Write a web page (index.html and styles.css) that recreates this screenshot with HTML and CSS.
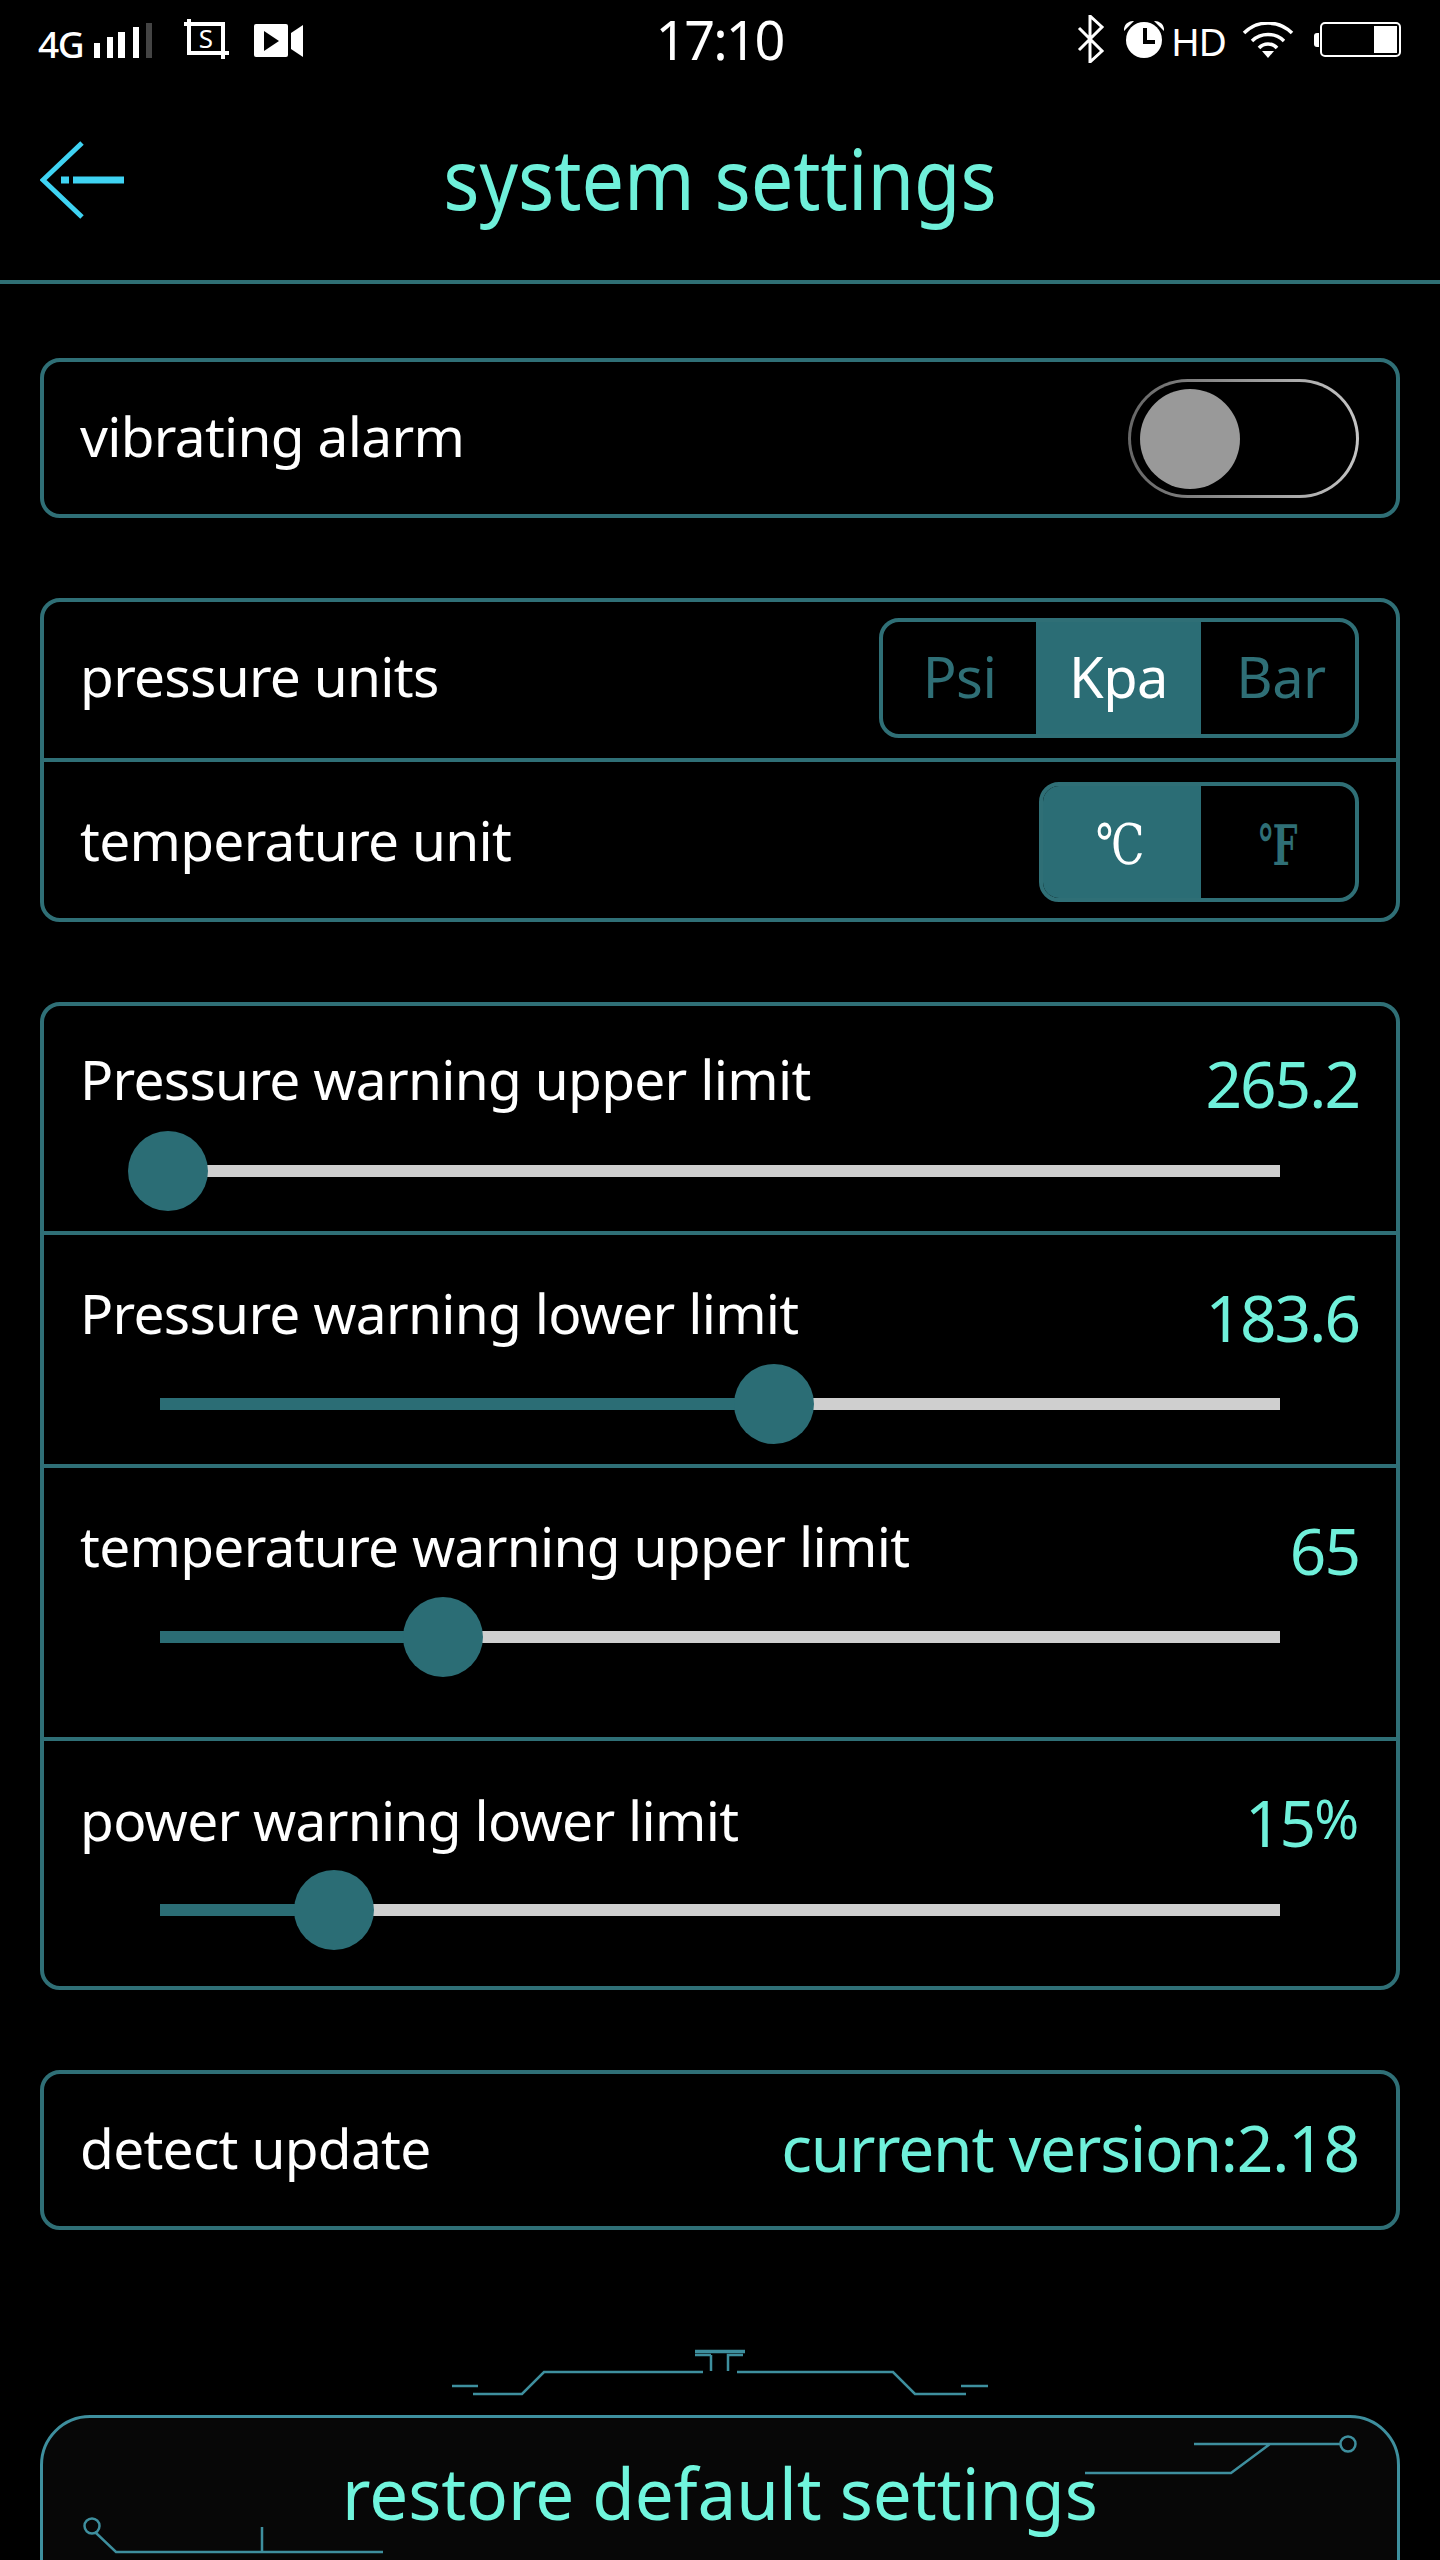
FILE: index.html
```html
<!DOCTYPE html>
<html lang="en">
<head>
<meta charset="utf-8">
<title>system settings</title>
<link rel="stylesheet" href="styles.css">
</head>
<body>
<div class="phone">
  <div class="status">
    <div class="status-left">
      <span class="net">4G</span>
      <svg class="i-signal" width="58" height="36" viewBox="0 0 58 36"><rect x="0" y="20" width="6" height="15" fill="#fff"/><rect x="13" y="14" width="6" height="21" fill="#fff"/><rect x="24" y="9" width="7" height="26" fill="#fff"/><rect x="39" y="4" width="6" height="31" fill="#fff"/><rect x="52" y="0" width="6" height="35" fill="#444"/></svg>
      <svg class="i-shot" width="46" height="40" viewBox="0 0 46 40"><path d="M5 0v34h40M0 5h39v35" fill="none" stroke="#fff" stroke-width="4"/><text x="22" y="29" class="shot-s">S</text></svg>
      <svg class="i-video" width="50" height="34" viewBox="0 0 50 34"><rect width="34" height="33" rx="2" fill="#fff"/><path d="M10 7l15 10-15 10z" fill="#000"/><path d="M37 9l12-8v32l-12-8z" fill="#fff"/></svg>
    </div>
    <div class="time">17:10</div>
    <div class="status-right">
      <svg class="i-bt" width="28" height="48" viewBox="0 0 28 48"><path d="M2 13l23 23-12 11V1l12 11L2 35" fill="none" stroke="#fff" stroke-width="3"/></svg>
      <svg class="i-alarm" width="40" height="38" viewBox="0 0 40 38"><circle cx="20" cy="20" r="18" fill="#fff"/><path d="M21 8v14h10" fill="none" stroke="#000" stroke-width="4"/><path d="M0 11a9 9 0 0 1 10-10zM40 11a9 9 0 0 0-10-10z" fill="#fff"/></svg>
      <span class="hd">HD</span>
      <svg class="i-wifi" width="52" height="36" viewBox="0 0 52 36"><path d="M2 11a34 34 0 0 1 48 0M10 19a23 23 0 0 1 32 0M17 26a12 12 0 0 1 18 0" fill="none" stroke="#fff" stroke-width="3.500"/><path d="M20 29h12l-6 7z" fill="#fff"/></svg>
      <div class="battery"><span class="battery-level"></span></div>
    </div>
  </div>

  <header class="topbar">
    <div class="back">
      <svg width="84" height="78" viewBox="0 0 84 78"><path d="M42 2L3 39l39 37" fill="none" stroke="#3fd3f3" stroke-width="5"/><rect x="21" y="35.500" width="8" height="7" fill="#3fd3f3"/><rect x="33" y="35.500" width="51" height="7" fill="#3fd3f3"/></svg>
    </div>
    <h1 class="title">system settings</h1>
    <div></div>
  </header>

  <main class="content">
    <section class="card">
      <div class="row row-switch">
        <span class="label">vibrating alarm</span>
        <div class="switch"><span class="switch-thumb"></span></div>
      </div>
    </section>

    <section class="card">
      <div class="row row-unit">
        <span class="label">pressure units</span>
        <div class="seg">
          <span class="seg-item">Psi</span>
          <span class="seg-item seg-on">Kpa</span>
          <span class="seg-item seg-end seg-bar">Bar</span>
        </div>
      </div>
      <div class="row row-unit">
        <span class="label">temperature unit</span>
        <div class="seg">
          <span class="seg-item seg-on seg-first"><span class="deg deg-c">℃</span></span>
          <span class="seg-item seg-end"><span class="deg deg-f">℉</span></span>
        </div>
      </div>
    </section>

    <section class="card">
      <div class="limit limit-a">
        <div class="limit-head"><span class="label">Pressure warning upper limit</span><span class="value">265.2</span></div>
        <div class="slider"><span class="slider-fill" style="width:0.7%"></span><span class="slider-thumb" style="left:0.7%"></span></div>
      </div>
      <div class="limit limit-a">
        <div class="limit-head"><span class="label">Pressure warning lower limit</span><span class="value">183.6</span></div>
        <div class="slider"><span class="slider-fill" style="width:54.8%"></span><span class="slider-thumb" style="left:54.8%"></span></div>
      </div>
      <div class="limit limit-b">
        <div class="limit-head"><span class="label">temperature warning upper limit</span><span class="value">65</span></div>
        <div class="slider"><span class="slider-fill" style="width:25.3%"></span><span class="slider-thumb" style="left:25.3%"></span></div>
      </div>
      <div class="limit limit-c">
        <div class="limit-head"><span class="label label-last">power warning lower limit</span><span class="value value-pct">15<span class="pct">%</span></span></div>
        <div class="slider"><span class="slider-fill" style="width:15.5%"></span><span class="slider-thumb" style="left:15.5%"></span></div>
      </div>
    </section>

    <section class="card card-update">
      <div class="row row-switch">
        <span class="label">detect update</span>
        <span class="version">current version:2.18</span>
      </div>
    </section>

    <svg class="circuit" width="1360" height="185" viewBox="0 0 1360 185">
      <g class="line">
        <path d="M412 156h26M433 164h49l22-22h159"/>
        <path class="line-bold" d="M655 121.500h50"/>
        <path d="M655 125h16M671 125v16M688 141v-16h15"/>
        <path d="M697 142h156l22 22h51M921 156h27"/>
      </g>
    </svg>

    <button class="restore" type="button">
      <svg class="restore-art" width="1360" height="145" viewBox="0 0 1360 145">
        <g class="line">
          <path d="M1154 29h146M1230 29l-39 29h-146"/>
          <circle cx="1308" cy="29" r="7.500"/>
          <circle cx="52" cy="111" r="7.500"/>
          <path d="M55 117l21 20h267M222 112v25"/>
        </g>
      </svg>
      <span class="restore-text">restore default settings</span>
    </button>
  </main>
</div>
</body>
</html>
```
FILE: styles.css
```css
* { box-sizing: border-box; }
html, body { margin: 0; padding: 0; background: #000; }
.phone {
  width: 1440px;
  height: 2560px;
  overflow: hidden;
  background: #000;
  color: #fff;
  font-family: "Noto Sans", "Open Sans", sans-serif;
}
.status {
  height: 80px;
  display: grid;
  grid-template-columns: 1fr auto 1fr;
  align-items: center;
  padding: 0 39px 0 38px;
}
.status-left, .status-right { display: flex; align-items: center; }
.status-right { justify-content: flex-end; }
.net { font-size: 37px; font-weight: 500; letter-spacing: -1.500px; width: 56px; line-height: 40px; margin-top: 8px; }
.i-signal { margin-top: 1px; }
.i-shot { margin-left: 32px; margin-top: -2px; }
.shot-s { font-size: 26px; fill: #fff; text-anchor: middle; font-family: "Noto Sans", sans-serif; }
.i-video { margin-left: 24px; margin-top: 1px; }
.time { font-size: 54px; line-height: 60px; margin-top: -2px; letter-spacing: -2px; }
.i-bt { margin-top: -2px; }
.i-alarm { margin-left: 19px; margin-top: -2px; }
.hd { font-size: 39px; line-height: 44px; margin-left: 7px; width: 64px; letter-spacing: -1.500px; margin-top: 2px; }
.i-wifi { margin-left: 7px; margin-top: -1px; }
.battery {
  width: 81px;
  height: 35px;
  margin-left: 26px;
  margin-top: -1px;
  border: 2.5px solid #fff;
  border-radius: 5px;
  display: flex;
  justify-content: flex-end;
  padding: 2px;
  position: relative;
}
.battery::before {
  content: "";
  position: absolute;
  left: -8px;
  top: 9px;
  width: 5px;
  height: 14px;
  background: #fff;
  border-radius: 3px 0 0 3px;
}
.battery-level { width: 23px; background: #fff; }

.topbar {
  height: 204px;
  border-bottom: 4px solid #2f6f74;
  display: grid;
  grid-template-columns: 1fr auto 1fr;
  align-items: center;
  padding: 0 40px;
}
.back { display: flex; }
.title {
  margin: -4px 0 0;
  font-size: 84px;
  font-weight: 400;
  color: #6ff0da;
  line-height: 100px;
  width: 552px;
  display: flex;
  justify-content: center;
  white-space: nowrap;
  transform: scaleX(.9);
}

.content { padding: 74px 40px 0; }
.card {
  border: 4px solid #2f6f76;
  border-radius: 20px;
  margin-bottom: 80px;
}
.row {
  display: flex;
  align-items: center;
  justify-content: space-between;
  padding: 0 37px 0 36px;
}
.row .label { margin-top: -4px; }
.row-switch { height: 152px; }
.row-unit { height: 156px; padding-bottom: 4px; }
.row-unit + .row-unit { border-top: 4px solid #2f6f76; height: 160px; padding-top: 4px; padding-bottom: 0; }
.label { font-size: 55px; letter-spacing: -0.700px; line-height: 70px; white-space: nowrap; }
.limit-head .label { margin-top: -1px; }
.limit-head .label-last { margin-top: 0; }
.switch {
  width: 231px;
  height: 119px;
  border-radius: 60px;
  border: 3px solid transparent;
  background: linear-gradient(#000, #000) padding-box, linear-gradient(90deg, #666, #c4c4c4) border-box;
  padding: 7px 9px;
}
.switch-thumb { display: block; width: 100px; height: 100px; border-radius: 50%; background: #999; }
.seg {
  display: flex;
  height: 120px;
  border: 4px solid #2f6f76;
  border-radius: 20px;
  overflow: hidden;
}
.seg-item {
  width: 153px;
  display: flex;
  align-items: center;
  justify-content: center;
  font-size: 56px;
  letter-spacing: -0.500px;
  color: #2f6f76;
  padding-bottom: 5px;
}
.seg-on { width: 165px; background: #2b6d75; color: #fff; margin: -4px 0; }
.seg-end { width: 154px; }
.seg-bar { padding-left: 6px; }
.seg-first { width: 162px; margin-left: -4px; }
.deg { display: inline-block; font-family: "Liberation Serif", "DejaVu Serif", serif; margin-top: 10px; }
.deg-c { transform: scaleX(.78); }
.deg-f { font-weight: 700; transform: scaleX(.62); }

.limit { padding: 0 37px 0 36px; }
.limit + .limit { border-top: 4px solid #2f6f76; }
.limit-a { height: 233px; }
.limit:first-child { height: 225px; }
.limit-b { height: 273px; }
.limit-c { height: 249px; }
.limit-head { display: flex; justify-content: space-between; align-items: flex-start; padding-top: 44px; height: 128px; }
.limit:first-child .limit-head { padding-top: 39px; height: 124px; }
.value { font-size: 64px; letter-spacing: -2px; line-height: 84px; margin-top: -3px; color: #6ff0da; white-space: nowrap; }
.value-pct { margin-top: -4px; }
.pct { font-size: 54px; letter-spacing: 0; line-height: 0; vertical-align: 8px; }
.slider { position: relative; height: 12px; margin: 35px 79px 0 80px; background: #cfcfcf; }
.slider-fill { display: block; height: 100%; background: #2b6d75; }
.slider-thumb {
  position: absolute;
  top: 50%;
  width: 80px;
  height: 80px;
  margin: -40px 0 0 -40px;
  border-radius: 50%;
  background: #2b6d75;
}

.card-update { margin-bottom: 0; }
.version { font-size: 64px; letter-spacing: -1.200px; line-height: 80px; margin-top: -4px; color: #6ff0da; white-space: nowrap; }
.circuit { display: block; }
.line { fill: none; stroke: #3e8f9e; stroke-width: 2.500; }
.line-bold { stroke-width: 3.500; }
.restore {
  position: relative;
  display: block;
  width: 1360px;
  height: 220px;
  padding: 0;
  background: #070707;
  border: 3px solid #3e8f9e;
  border-radius: 50px;
  font-family: inherit;
  text-align: center;
}
.restore-art { position: absolute; left: -3px; top: -3px; }
.restore-text {
  position: absolute;
  left: 0;
  right: 0;
  top: 29px;
  font-size: 72px;
  line-height: 90px;
  color: #70f5dd;
  white-space: nowrap;
  transform: scaleX(.96);
}
```
